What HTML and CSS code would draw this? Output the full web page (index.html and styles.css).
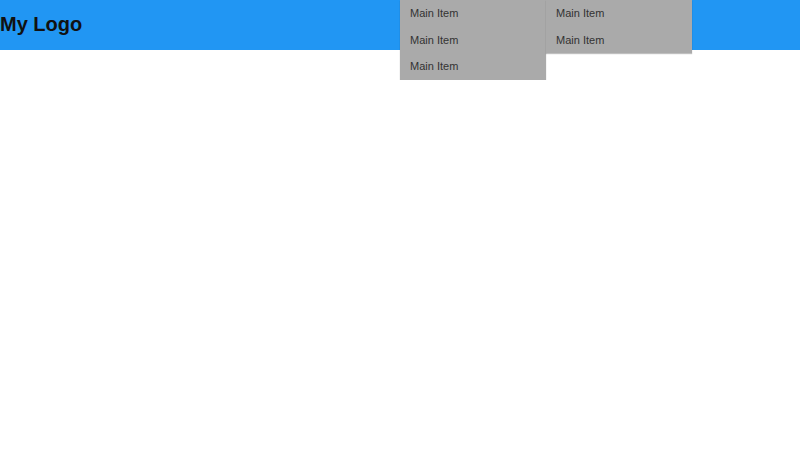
FILE: index.html
```html
<!DOCTYPE html>
<html>
<head>
<meta charset="utf-8">
<link rel="stylesheet" href="styles.css">
</head>
<body>
<header class="header">
  <div class="logo">My Logo</div>
  <nav class="nav">
    <ul class="menu">
      <li class="item">Main Item</li>
      <li class="item">Main Item</li>
      <li class="item">Main Item</li>
    </ul>
    <ul class="menu">
      <li class="item">Main Item</li>
      <li class="item">Main Item</li>
    </ul>
  </nav>
</header>
</body>
</html>
```
FILE: styles.css
```css
html, body {
  margin: 0;
  padding: 0;
  background: #fff;
  font-family: "Liberation Sans", Arial, sans-serif;
}
.header {
  background: linear-gradient(#2196f3, #2196f3) top left / 100% 50px no-repeat;
  display: grid;
  grid-template-columns: 400px 1fr;
  align-items: start;
}
.logo {
  font-size: 20px;
  font-weight: bold;
  line-height: 48px;
  color: #111;
}
.nav {
  display: flex;
  align-items: flex-start;
}
.menu {
  list-style: none;
  margin: 0;
  padding: 0;
  width: 146px;
  background: #aaaaaa;
  box-shadow: 0 1px 1px rgba(0,0,0,0.25);
}
.item {
  font-size: 11px;
  line-height: 14.5px;
  padding: 6px 10px;
  color: #333;
}
```
